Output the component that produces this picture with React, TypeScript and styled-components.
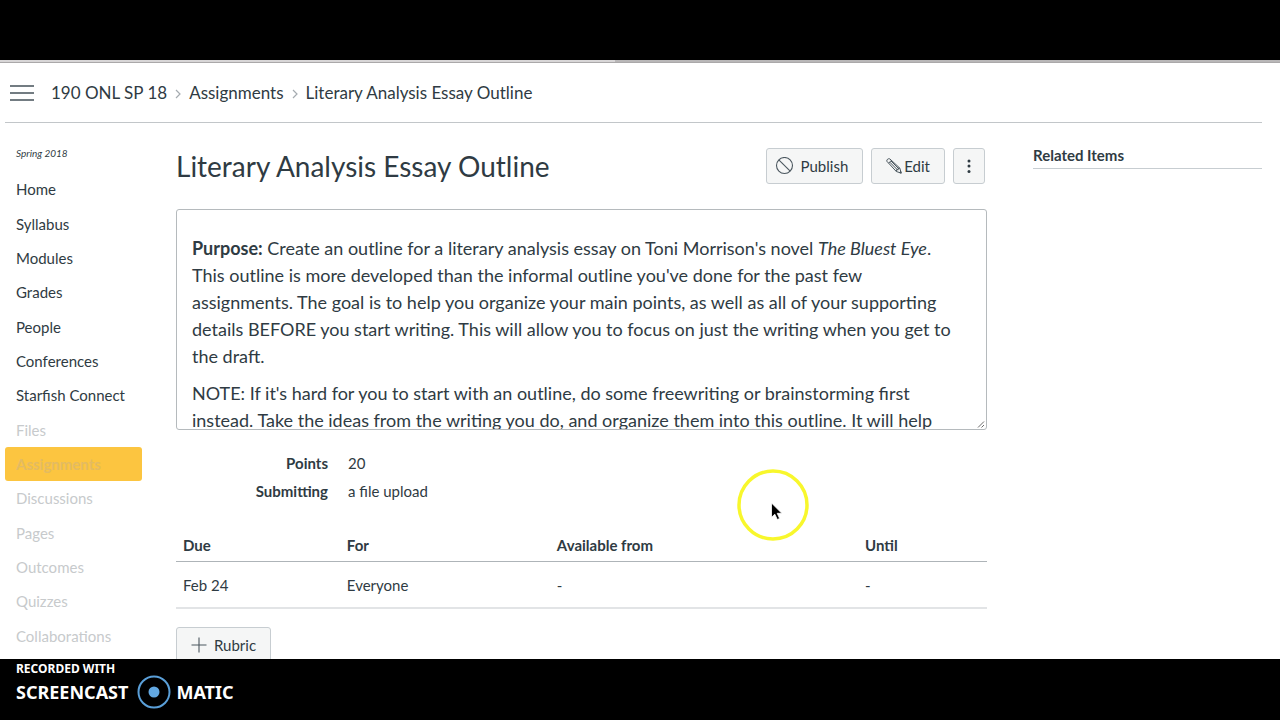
import React from "react";
import styled, { createGlobalStyle } from "styled-components";

const GlobalStyle = createGlobalStyle`
  *, *::before, *::after { box-sizing: border-box; }
  body {
    margin: 0;
    background: #000;
    color: #2f3b43;
    font: 15px/24px Lato, "Open Sans", sans-serif;
  }
  a { color: inherit; text-decoration: none; }
`;

const Frame = styled.div`
  position: relative;
  display: flex;
  flex-direction: column;
  height: 100vh;
`;

const TopBand = styled.div`
  flex: none;
  height: 60px;
`;

const Page = styled.div`
  flex: 1;
  min-height: 0;
  overflow: hidden;
  background: #fff;
  padding: 0 18px 0 5px;
`;

const WindowEdge = styled.div`
  display: flex;
  height: 3px;
  margin: 0 -18px 0 -5px;
`;

const EdgePart = styled.div<{ $share: number; $top: string }>`
  flex: ${(p) => p.$share};
  border-bottom: 1px solid #aaa8a9;
  background: ${(p) => p.$top};
`;

const Header = styled.header`
  display: flex;
  align-items: center;
  height: 60px;
  padding-left: 5px;
  border-bottom: 1px solid #c2c6c9;
`;

const MenuButton = styled.button`
  display: flex;
  margin: 0 17px 0 0;
  padding: 0;
  border: 0;
  background: none;
`;

const Crumbs = styled.ol`
  display: flex;
  align-items: center;
  margin: 0;
  padding: 0;
  list-style: none;
  font-size: 17px;
  li + li { display: flex; align-items: center; }
  li + li svg { margin: 2px 8px 0; }
`;

const Columns = styled.div`
  display: flex;
`;

const Sidebar = styled.nav`
  flex: none;
  width: 137px;
  margin-right: 34px;
  padding-top: 20px;
`;

const Term = styled.div`
  padding-left: 11px;
  font-size: 10px;
  line-height: 20px;
  font-style: italic;
`;

const NavList = styled.ul`
  display: grid;
  grid-auto-rows: 1fr;
  height: 481px;
  margin: 9px 0 0;
  padding: 0;
  list-style: none;
`;

const NavLink = styled.a<{ $muted?: boolean; $active?: boolean }>`
  display: flex;
  align-items: center;
  height: 100%;
  padding-left: 11px;
  border-radius: 3px;
  color: ${(p) => (p.$active ? "#e3bb62" : p.$muted ? "#c7cacc" : "#2f3b43")};
  background: ${(p) => (p.$active ? "#fcc540" : "transparent")};
  font-weight: ${(p) => (p.$active ? 700 : 400)};
`;

const Main = styled.main`
  flex: 1;
  min-width: 0;
  padding-top: 25px;
`;

const TitleRow = styled.div`
  display: flex;
  align-items: center;
  height: 36px;
  padding-right: 2px;
`;

const Title = styled.h1`
  flex: 1;
  margin: 0;
  font-size: 28px;
  line-height: 36px;
  font-weight: 400;
`;

const Button = styled.button`
  display: inline-flex;
  align-items: center;
  justify-content: center;
  height: 36px;
  padding: 0 14px;
  border: 1px solid #c7cdd1;
  border-radius: 3px;
  background: #f5f6f6;
  color: #2f3b43;
  font: inherit;
`;

const Toolbar = styled.div`
  display: flex;
  gap: 8px;
  ${Button}:first-child { padding-left: 8px; gap: 7px; }
  ${Button}:nth-child(2) { gap: 2px; }
  ${Button}:last-child { padding: 0 12px; }
`;

const Description = styled.section`
  position: relative;
  height: 221px;
  margin-top: 25px;
  padding: 25px 26px 0 15px;
  overflow: hidden;
  border: 1px solid #b5babd;
  border-radius: 3px;
  font-size: 18px;
  line-height: 27px;
  p { margin: 0 0 10px; }
`;

const ResizeGrip = styled.svg`
  position: absolute;
  right: 0;
  bottom: 0;
`;

const Details = styled.dl`
  display: grid;
  grid-template-columns: 152px 1fr;
  column-gap: 20px;
  margin: 19px 0 0;
  line-height: 28px;
  dt { text-align: right; font-weight: 700; }
  dd { margin: 0; }
`;

const Dates = styled.table`
  width: 100%;
  margin-top: 24px;
  table-layout: fixed;
  border-collapse: collapse;
  text-align: left;
  th, td { padding: 0 7px; }
  th { height: 32px; border-bottom: 1px solid #aeb4b8; }
  td { height: 47px; padding-top: 2px; border-bottom: 2px solid #e2e4e6; }
`;

const Col = styled.col<{ $share: string }>`
  width: ${(p) => p.$share};
`;

const RubricButton = styled(Button)`
  margin-top: 18px;
  gap: 7px;
`;

const Related = styled.aside`
  flex: none;
  width: 229px;
  margin-left: 46px;
  padding-top: 20px;
  h2 {
    margin: 0;
    padding-bottom: 1px;
    font-size: 15px;
    line-height: 24px;
    border-bottom: 1px solid #c7cdd1;
  }
`;

const RecorderBar = styled.footer`
  flex: none;
  height: 61px;
  padding: 2px 0 0 16px;
  color: #fff;
  font-family: "Noto Sans", sans-serif;
  font-weight: 700;
`;

const RecordedWith = styled.div`
  font-size: 12px;
  line-height: 16px;
`;

const Brand = styled.div`
  display: flex;
  align-items: center;
  height: 30px;
  font-size: 18px;
  line-height: 30px;
  svg { flex: none; margin: 0 5px 0 9px; }
`;

const Pointer = styled.svg`
  position: absolute;
  left: 736px;
  top: 468px;
  pointer-events: none;
`;

const navItems = [
  { label: "Home" },
  { label: "Syllabus" },
  { label: "Modules" },
  { label: "Grades" },
  { label: "People" },
  { label: "Conferences" },
  { label: "Starfish Connect" },
  { label: "Files", muted: true },
  { label: "Assignments", active: true },
  { label: "Discussions", muted: true },
  { label: "Pages", muted: true },
  { label: "Outcomes", muted: true },
  { label: "Quizzes", muted: true },
  { label: "Collaborations", muted: true },
];

const Chevron = () => (
  <svg width="6" height="10" viewBox="0 0 6 10" fill="none" stroke="#a5abb0" strokeWidth="1.2">
    <path d="M1 1l4 4-4 4" />
  </svg>
);

const UnpublishedIcon = () => (
  <svg width="19" height="19" viewBox="0 0 19 19" fill="none" stroke="#4b575f" strokeWidth="1.1">
    <circle cx="9.5" cy="8.5" r="8" />
    <path d="M3.800 2.800l11.400 11.400" />
  </svg>
);

const PencilIcon = () => (
  <svg width="16" height="16" viewBox="0 0 16 16" fill="none" stroke="#4b575f" strokeWidth="1" strokeLinejoin="round">
    <path d="M.8 3.2Q.6 2 1.6 1.2 2.6.4 3.8.9l10 9.2 1.4 5-4.9-1.6z" />
    <path d="M2.6 5.2l2.9-3M3.7 4.1l8 8M5 3l8 8M10.3 13.5l.2-1.7 1.7-.1.1-1.6 1.5 0" />
    <path d="M13.4 14.6l1.8.5-.5-1.8z" fill="#4b575f" />
  </svg>
);

export default function App() {
  return (
    <Frame>
      <GlobalStyle />
      <TopBand />
      <Page>
        <WindowEdge>
          <EdgePart $share={615} $top="#d8d6d7" />
          <EdgePart $share={665} $top="#b9b7b8" />
        </WindowEdge>
        <Header>
          <MenuButton aria-label="Course menu">
            <svg width="24" height="16" viewBox="0 0 24 16" stroke="#46525a" strokeWidth="1.5">
              <path d="M0 1h24M0 8h24M0 15h24" />
            </svg>
          </MenuButton>
          <Crumbs>
            <li><a href="#course">190 ONL SP 18</a></li>
            <li><Chevron /><a href="#assignments">Assignments</a></li>
            <li><Chevron />Literary Analysis Essay Outline</li>
          </Crumbs>
        </Header>
        <Columns>
          <Sidebar>
            <Term>Spring 2018</Term>
            <NavList>
              {navItems.map((item) => (
                <li key={item.label}>
                  <NavLink href="#nav" $muted={item.muted} $active={item.active}>
                    {item.label}
                  </NavLink>
                </li>
              ))}
            </NavList>
          </Sidebar>
          <Main>
            <TitleRow>
              <Title>Literary Analysis Essay Outline</Title>
              <Toolbar>
                <Button><UnpublishedIcon />Publish</Button>
                <Button><PencilIcon />Edit</Button>
                <Button aria-label="More options">
                  <svg width="6" height="16" viewBox="0 0 6 16" fill="#2f3b43">
                    <circle cx="3" cy="3" r="1.5" />
                    <circle cx="3" cy="8" r="1.5" />
                    <circle cx="3" cy="13.4" r="1.5" />
                  </svg>
                </Button>
              </Toolbar>
            </TitleRow>
            <Description>
              <p>
                <strong>Purpose:</strong> Create an outline for a literary analysis essay on Toni
                Morrison's novel <em>The Bluest Eye</em>. This outline is more developed than the
                informal outline you've done for the past few assignments. The goal is to help you
                organize your main points, as well as all of your supporting details BEFORE you
                start writing. This will allow you to focus on just the writing when you get to the
                draft.
              </p>
              <p>
                NOTE: If it's hard for you to start with an outline, do some freewriting or
                brainstorming first instead. Take the ideas from the writing you do, and organize
                them into this outline. It will help
              </p>
              <ResizeGrip width="9" height="9" viewBox="0 0 9 9" fill="none" stroke="#6b6b6b" strokeWidth="1">
                <path d="M1 7.500L7 1.500M4.500 7.500L7 5" />
              </ResizeGrip>
            </Description>
            <Details>
              <dt>Points</dt>
              <dd>20</dd>
              <dt>Submitting</dt>
              <dd>a file upload</dd>
            </Details>
            <Dates>
              <colgroup>
                <Col $share="20.2%" />
                <Col $share="25.9%" />
                <Col $share="38%" />
                <Col $share="15.9%" />
              </colgroup>
              <thead>
                <tr>
                  <th scope="col">Due</th>
                  <th scope="col">For</th>
                  <th scope="col">Available from</th>
                  <th scope="col">Until</th>
                </tr>
              </thead>
              <tbody>
                <tr>
                  <td>Feb 24</td>
                  <td>Everyone</td>
                  <td>-</td>
                  <td>-</td>
                </tr>
              </tbody>
            </Dates>
            <RubricButton>
              <svg width="16" height="16" viewBox="0 0 16 16" stroke="#4b575f" strokeWidth="1.1">
                <path d="M8 .5v15M.5 8h15" />
              </svg>
              Rubric
            </RubricButton>
          </Main>
          <Related>
            <h2>Related Items</h2>
          </Related>
        </Columns>
      </Page>
      <RecorderBar>
        <RecordedWith>RECORDED WITH</RecordedWith>
        <Brand>
          <span>SCREENCAST</span>
          <svg width="34" height="34" viewBox="0 0 34 34">
            <circle cx="17" cy="17" r="15.500" fill="none" stroke="#5a9fd8" strokeWidth="2" />
            <circle cx="17" cy="17" r="5.500" fill="#62a8e2" />
          </svg>
          <span>MATIC</span>
        </Brand>
      </RecorderBar>
      <Pointer width="74" height="74" viewBox="0 0 74 74">
        <circle cx="37" cy="37" r="34" fill="none" stroke="#f8f72c" strokeWidth="3.500" />
        <path
          d="M35.500 35v14.300l3.300-3.100 2.500 5.300 2.300-1-2.400-5.200h4.600z"
          fill="#000"
          stroke="#fff"
          strokeWidth="0.8"
        />
      </Pointer>
    </Frame>
  );
}
